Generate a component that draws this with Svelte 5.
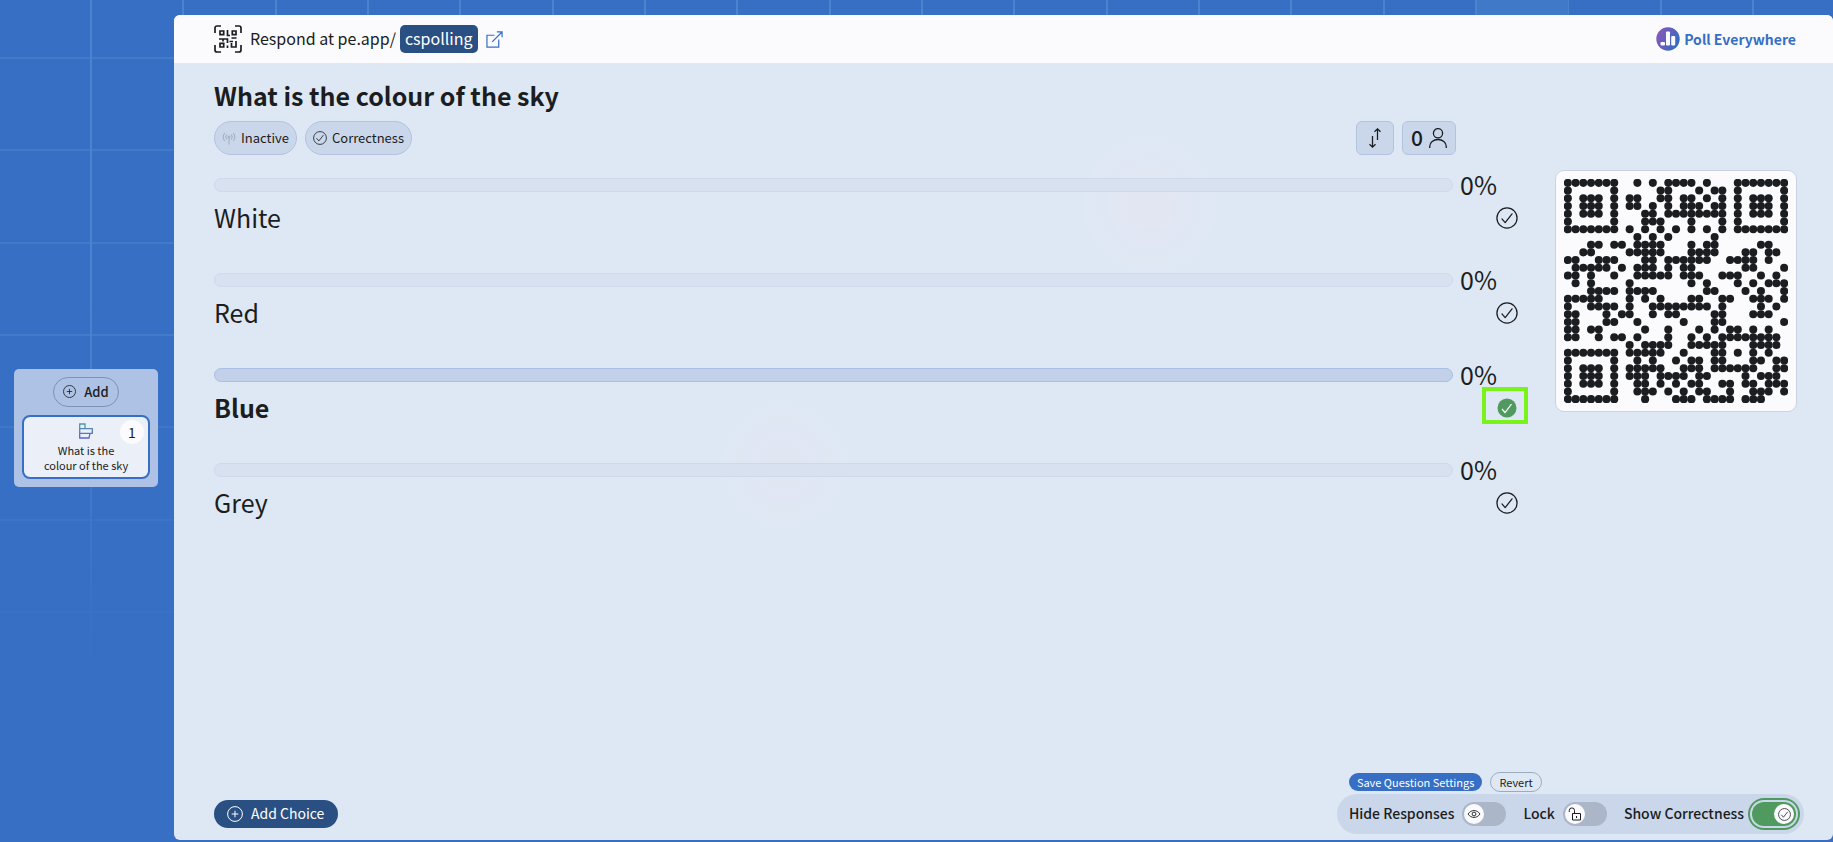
<script>
  const choices = [
    { label: 'White', correct: false },
    { label: 'Red', correct: false },
    { label: 'Blue', correct: true },
    { label: 'Grey', correct: false }
  ];

  // Each row lists runs of filled modules in a 29 by 29 code.
  const modules = [
    '0-6,9,11,13-16,18,22-28',
    '0,6,12-13,17,19-20,22,28',
    '0,2-4,6,8-9,12-13,15-16,18,20,22,24-26,28',
    '0,2-4,6,8-9,11,13,15-17,19-20,22,24-26,28',
    '0,2-4,6,10-11,13-20,22,24-26,28',
    '0,6,10-12,16,20,22,28',
    '0-6,8,10,12,14,16,18,20,22-28',
    '9,11,13,19',
    '3-4,6-7,9-12,16,18-19,25-26',
    '2-3,8-12,16-19,23-24,26-27',
    '0-1,4-6,10-11,13-18,21-24,26',
    '1-5,7,9-11,13,15-16,23-24,28',
    '0-1,3,6,9-13,15-17,20-22,25,27',
    '1,3,8,16,18,22,24,26-28',
    '3-6,8-11,18-19,23,25,28',
    '0-4,8,10,12,16-17,20-21,24-26,28',
    '0,3-6,8,11-18,20,25,27',
    '0-1,5,7-8,11,13-14,19-20,24-26',
    '0-1,5-6,9,15,19-20,28',
    '0-1,3-4,10,13,17,19,21-22,24,26',
    '0-1,4,6-7,9,13,16,18,20-27',
    '8,10-13,16-20,24-27',
    '0-6,8-12,15,19-20,22,24,26',
    '0,6,9,11,14,16-17,19-20,24-25,27-28',
    '0,2-4,6,8-12,15-17,19-24,27-28',
    '0,2-4,6,8-10,12-15,17-18,23,25-27',
    '0,2-4,6,9-10,12,14,16-17,20-21,23-24,26-28',
    '0,6,9-11,13,15,17-18,21,24-26,28',
    '0-6,10,14-16,18-21,23-25'
  ];
  const dots = modules.flatMap((row, y) =>
    row.split(',').flatMap((run) => {
      const [a, b = a] = run.split('-').map(Number);
      return Array.from({ length: b - a + 1 }, (_, i) => ({ x: a + i, y }));
    })
  );
</script>

{#snippet check(size)}
  <svg width={size} height={size} viewBox="0 0 24 24" fill="none" stroke="currentColor" stroke-width="1.4" aria-hidden="true">
    <circle cx="12" cy="12" r="11" />
    <path d="M6.500 13l3.500 4 7.500-9.500" stroke-linecap="round" stroke-linejoin="round" />
  </svg>
{/snippet}

{#snippet plus(size)}
  <svg width={size} height={size} viewBox="0 0 16 16" fill="none" stroke="currentColor" aria-hidden="true">
    <circle cx="8" cy="8" r="7.400" />
    <path d="M8 4.700v6.600M4.700 8h6.600" />
  </svg>
{/snippet}

<div class="app">
  <nav class="side" aria-label="Activities">
    <div class="tray">
      <button class="add">{@render plus(13)}Add</button>
      <button class="slide">
        <svg width="16" height="16" viewBox="0 0 16 16" fill="none" stroke-width="1.300" aria-hidden="true">
          <defs>
            <linearGradient id="bars" x1="0" y1="0" x2="0" y2="16" gradientUnits="userSpaceOnUse">
              <stop offset="0" stop-color="#4f9f9c" />
              <stop offset="1" stop-color="#5d5fd6" />
            </linearGradient>
          </defs>
          <g stroke="url(#bars)">
            <path d="M1.700 5.700V1h5.300v4.700M1.700 10.400V15h9.300l1-4.600" />
            <path d="M1.700 5.700h12.600v4.700H1.700z" />
          </g>
        </svg>
        <span class="slide-title">What is the colour of the sky</span>
        <span class="number">1</span>
      </button>
    </div>
  </nav>

  <main class="panel">
    <header class="top">
      <div class="join">
        <svg width="28" height="28" viewBox="0 0 28 28" fill="none" stroke="#1b1d21" stroke-width="1.700" aria-hidden="true">
          <path d="M1 8V3a2 2 0 0 1 2-2h4M21 1h4a2 2 0 0 1 2 2v5M27 20v5a2 2 0 0 1-2 2h-4M7 27H3a2 2 0 0 1-2-2v-5" />
          <path d="M6 6h3.700v3.700H6zM18.300 6H22v3.700h-3.700zM6 18.300h3.700V22H6zM13.500 5v5.500h2.500M5 14h8.500v4M9 14v2.500M13.500 20.500v2.500M17.500 13h5M17.500 18v4H22v-6M19 16.500h-3.500" />
        </svg>
        <span class="join-text"><span>Respond at pe.app/</span><strong>cspolling</strong></span>
        <a class="open" href="#top" aria-label="Open response page">
          <svg width="17" height="17" viewBox="0 0 18 18" fill="none" stroke="currentColor" stroke-width="1.300" aria-hidden="true">
            <path d="M9 4.500H1V17h12.500V9M6.500 11.500L17 1M11.500 1H17v5.500" />
          </svg>
        </a>
      </div>
      <div class="brand">
        <svg width="24" height="24" viewBox="0 0 24 24" aria-hidden="true">
          <defs>
            <linearGradient id="logo" x1="0" y1="0.200" x2="1" y2="0.700">
              <stop offset="0" stop-color="#8a58b5" />
              <stop offset="1" stop-color="#2f6cc4" />
            </linearGradient>
          </defs>
          <circle cx="12" cy="12" r="11.700" fill="url(#logo)" />
          <g fill="#fbfbfe">
            <rect x="4.500" y="15" width="4.500" height="3.500" rx="1" />
            <rect x="10" y="4.500" width="4" height="14" rx="1" />
            <rect x="15.200" y="9" width="4" height="9.500" rx="1" />
          </g>
        </svg>
        <span>Poll Everywhere</span>
      </div>
    </header>

    <div class="body">
      <section class="results">
        <h1>What is the colour of the sky</h1>
        <div class="toolbar">
          <div class="group">
            <button class="pill">
              <svg class="faded" width="14" height="14" viewBox="0 0 14 14" fill="none" stroke="currentColor" stroke-width="0.900" aria-hidden="true">
                <circle cx="7" cy="6" r="1" />
                <path d="M7 7v6.500M4.700 3.500a4 4 0 0 0 0 5M9.300 3.500a4 4 0 0 1 0 5M2.700 2a6.500 6.500 0 0 0 0 8M11.300 2a6.500 6.500 0 0 1 0 8" />
              </svg>
              <span>Inactive</span>
            </button>
            <button class="pill">{@render check(14)}<span>Correctness</span></button>
          </div>
          <div class="group">
            <button class="square" aria-label="Sort">
              <svg width="12" height="20" viewBox="0 0 12 20" fill="none" stroke="currentColor" stroke-width="1.300" aria-hidden="true">
                <path d="M8.500 12V.900M5.500 3.800L8.500.900l3 2.900M3.500 8v11M.500 16.200l3 2.900 3-2.900" />
              </svg>
            </button>
            <button class="square count" aria-label="0 participants">
              <span>0</span>
              <svg width="18" height="20" viewBox="0 0 18 20" fill="none" stroke="currentColor" stroke-width="1.300" aria-hidden="true">
                <circle cx="9" cy="5.200" r="4.600" />
                <path d="M.700 20v-1.500a8.300 7 0 0 1 16.600 0V20" />
              </svg>
            </button>
          </div>
        </div>

        <ul class="choices">
          {#each choices as choice}
            <li class:correct={choice.correct}>
              <div class="bar"></div>
              <span class="percent">0%</span>
              <span class="label">{choice.label}</span>
              <div class="mark">
                <button class="toggle" aria-label={`Mark ${choice.label} as correct`}>
                  {#if choice.correct}
                    <svg width="20" height="20" viewBox="0 0 20 20" aria-hidden="true">
                      <circle cx="10" cy="10" r="9.500" fill="#509a5f" />
                      <path d="M5 11l3 3.500 6.500-8.300" fill="none" stroke="#fff" stroke-width="1.200" />
                    </svg>
                  {:else}
                    {@render check(22)}
                  {/if}
                </button>
              </div>
            </li>
          {/each}
        </ul>
      </section>

      <aside class="code">
        <svg viewBox="0 0 29 29" role="img" aria-label="QR code to respond" fill="#1b1d21">
          {#each dots as dot}
            <circle cx={dot.x + 0.5} cy={dot.y + 0.5} r="0.520" />
          {/each}
        </svg>
      </aside>
    </div>

    <footer class="bottom">
      <button class="choice-add">{@render plus(16)}<span>Add Choice</span></button>
      <div class="settings">
        <div class="actions">
          <button class="save">Save Question Settings</button>
          <button class="revert">Revert</button>
        </div>
        <div class="switches">
          <label class="switch">
            <span>Hide Responses</span>
            <input type="checkbox" />
            <span class="track"><span class="knob">
              <svg width="14" height="14" viewBox="0 0 14 14" fill="none" stroke="currentColor" stroke-width="0.900" aria-hidden="true">
                <path d="M1 7c3.200-4.600 8.800-4.600 12 0-3.200 4.600-8.800 4.600-12 0z" />
                <circle cx="7" cy="7" r="1.900" />
              </svg>
            </span></span>
          </label>
          <label class="switch">
            <span>Lock</span>
            <input type="checkbox" />
            <span class="track"><span class="knob">
              <svg width="14" height="14" viewBox="0 0 14 14" fill="none" stroke="currentColor" aria-hidden="true">
                <path d="M4.500 6.500h8v6.500h-8zM8.500 9v2M6.500 6.500V3.500a2.600 2.600 0 0 0-5.200 0V5" />
              </svg>
            </span></span>
          </label>
          <label class="switch">
            <span>Show Correctness</span>
            <input type="checkbox" checked />
            <span class="track"><span class="knob">{@render check(13)}</span></span>
          </label>
        </div>
      </div>
    </footer>
  </main>
</div>

<style>
  :global(body) {
    margin: 0;
  }
  * {
    box-sizing: border-box;
  }
  .app {
    display: flex;
    min-height: 100vh;
    padding: 15px 0 2px;
    color: #1b1d21;
    font-family: 'Noto Sans CJK SC', 'Noto Sans', sans-serif;
    background-color: #366fc4;
    background-image:
      linear-gradient(to bottom, transparent 300px, #366fc4 680px),
      linear-gradient(#3f79c8, #3f79c8),
      repeating-linear-gradient(to right, transparent 0 90px, #4a83ce 90px 92px, transparent 92px 182px, #4a83ce 182px 184px, transparent 184px 275px, #4a83ce 275px 277px),
      repeating-linear-gradient(to bottom, transparent 0 90px, #447bc9 90px 92px, transparent 92px 182px, #447bc9 182px 184px, transparent 184px 275px, #447bc9 275px 277px);
    background-position: 0 0, right 265px top 0, 0 0, 0 -33px;
    background-size: 100% 100%, 91px 15px, 100% 100%, 100% 150%;
    background-repeat: no-repeat;
  }
  button {
    display: inline-flex;
    align-items: center;
    justify-content: center;
    margin: 0;
    padding: 0;
    border: 0;
    background: none;
    color: inherit;
    font: inherit;
    white-space: nowrap;
    cursor: pointer;
  }
  svg {
    display: block;
    flex: none;
  }
  .side {
    display: flex;
    flex: 0 0 174px;
    align-items: center;
    padding: 0 16px 0 14px;
  }
  .tray {
    display: flex;
    flex: 1;
    flex-direction: column;
    align-items: center;
    gap: 8px;
    padding: 8px;
    border-radius: 5px;
    background: #aec2e6;
  }
  .add {
    gap: 8px;
    width: 66px;
    height: 30px;
    border: 1px solid #7b93b5;
    border-radius: 15px;
    font-size: 13px;
    font-weight: 500;
  }
  .slide {
    position: relative;
    flex-direction: column;
    gap: 4px;
    width: 100%;
    height: 64px;
    padding-top: 2px;
    border: 2px solid #366fc4;
    border-radius: 8px;
    background: #ebeff8;
    font-size: 11px;
    line-height: 15px;
    white-space: normal;
  }
  .slide-title {
    width: 88px;
  }
  .number {
    position: absolute;
    top: 3px;
    right: 4px;
    width: 24px;
    height: 24px;
    border-radius: 50%;
    background: #fbfbfe;
    font-size: 14px;
    line-height: 24px;
  }
  .panel {
    display: flex;
    flex: 1;
    flex-direction: column;
    min-width: 0;
    overflow: hidden;
    border-radius: 6px;
    background:
      radial-gradient(circle at 975px 190px, #e2e6f3 0 20px, transparent 70px),
      radial-gradient(circle at 610px 450px, #e1e6f3 0 20px, transparent 65px),
      #dee8f4;
  }
  .top {
    display: flex;
    align-items: center;
    justify-content: space-between;
    height: 48px;
    padding: 0 37px 0 40px;
    background: #fbfbfe;
  }
  .join,
  .brand {
    display: flex;
    align-items: center;
    gap: 8px;
  }
  .join-text {
    display: flex;
    align-items: center;
    gap: 4px;
    font-size: 16px;
    line-height: 26px;
  }
  .join-text span,
  .pill span,
  .choice-add span,
  .count span,
  .switch > span:first-child {
    padding-bottom: 2px;
  }
  .join-text strong {
    padding: 0 5px 2px;
    border-radius: 5px;
    background: #2a4f82;
    color: #fff;
    font-weight: 400;
  }
  .open {
    color: #366fc4;
  }
  .brand {
    gap: 4px;
    color: #366fc4;
    font-size: 14px;
    font-weight: 700;
  }
  .body {
    display: flex;
    flex: 1;
    align-items: flex-start;
    gap: 36px;
    padding: 0 36px 0 40px;
  }
  .results {
    flex: 1;
    min-width: 0;
  }
  h1 {
    margin: 0;
    padding: 11px 0 1px;
    font-size: 25px;
    font-weight: 700;
    line-height: 42px;
  }
  .toolbar {
    display: flex;
    justify-content: space-between;
    padding: 4px 63px 0 0;
  }
  .group {
    display: flex;
    gap: 8px;
  }
  .pill,
  .square {
    height: 34px;
    border: 1px solid #b3c2de;
    background: #cad7ea;
  }
  .pill {
    gap: 5px;
    padding: 0 7px;
    border-radius: 17px;
    font-size: 13px;
  }
  .faded {
    color: #9ba7b8;
  }
  .square {
    width: 38px;
    border-radius: 6px;
  }
  .count {
    gap: 6px;
    width: 54px;
    font-size: 21px;
    font-weight: 500;
  }
  .choices {
    display: grid;
    gap: 29px;
    margin: 0;
    padding: 14px 0 0;
    list-style: none;
  }
  li {
    display: grid;
    grid-template-columns: 1fr 59px;
    column-gap: 7px;
    grid-template-rows: 32px 34px;
    align-items: center;
    font-size: 25px;
    line-height: 30px;
  }
  .bar {
    height: 14px;
    border: 1px solid #ced9ec;
    border-radius: 7px;
    background: #d7e1f0;
  }
  .correct .bar {
    border-color: #aabfe2;
    background: #c2d1e9;
  }
  .percent {
    padding-bottom: 2px;
  }
  .label {
    padding-bottom: 3px;
  }
  .correct .label {
    font-weight: 700;
  }
  .mark {
    display: flex;
    justify-content: flex-end;
  }
  .toggle {
    width: 46px;
    height: 37px;
    margin: -9px -9px -3px 0;
    padding: 5px 0 0 4px;
    border: 4px solid transparent;
  }
  .correct .toggle {
    border-color: #7af31d;
  }
  .code {
    flex: none;
    width: 242px;
    margin-top: 107px;
    padding: 8px;
    border: 1px solid #c8d3e4;
    border-radius: 9px;
    background: #fbfbfe;
  }
  .bottom {
    display: flex;
    align-items: flex-end;
    justify-content: space-between;
    padding: 0 29px 6px 40px;
  }
  .choice-add {
    gap: 8px;
    height: 28px;
    margin-bottom: 6px;
    padding: 0 14px 0 13px;
    border-radius: 14px;
    background: #2a4f82;
    color: #fff;
    font-size: 14px;
  }
  .actions {
    display: flex;
    align-items: center;
    gap: 8px;
    padding: 0 12px 2px;
  }
  .actions button {
    height: 18px;
    padding: 0 8px 1px;
    border-radius: 10px;
    font-size: 11px;
  }
  .actions .save {
    background: #366fc4;
    color: #fff;
  }
  .actions .revert {
    height: 20px;
    border: 1px solid #9eabbd;
  }
  .switches {
    display: flex;
    gap: 17px;
    padding: 0 8px 0 12px;
    border-radius: 20px;
    background: #cad7ea;
  }
  .switch {
    display: flex;
    align-items: center;
    gap: 8px;
    height: 40px;
    font-size: 14px;
    font-weight: 500;
    cursor: pointer;
  }
  .switch input {
    position: absolute;
    opacity: 0;
  }
  .track {
    display: flex;
    width: 44px;
    height: 24px;
    padding: 2px;
    border-radius: 12px;
    background: #abb6c8;
  }
  .knob {
    display: grid;
    place-items: center;
    width: 20px;
    height: 20px;
    border-radius: 50%;
    background: #fbfbfe;
  }
  input:checked + .track {
    justify-content: flex-end;
    background: #509a5f;
    box-shadow: 0 0 0 2px #cad7ea, 0 0 0 4px #509a5f;
  }
</style>
